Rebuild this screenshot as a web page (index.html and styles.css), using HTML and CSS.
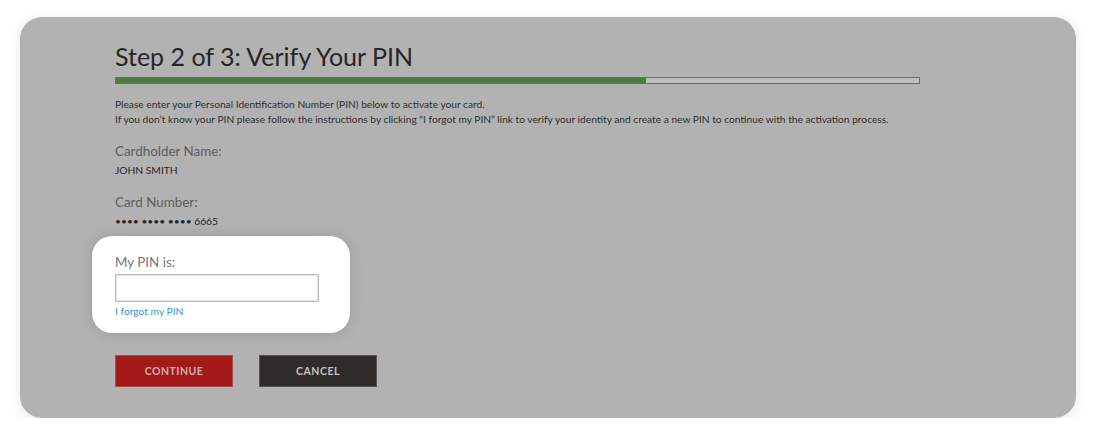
FILE: index.html
```html
<!DOCTYPE html>
<html lang="en">
<head>
<meta charset="utf-8">
<title>Step 2 of 3: Verify Your PIN</title>
<link rel="stylesheet" href="styles.css">
</head>
<body>
<main class="card">
  <h1 class="title">Step 2 of 3: Verify Your PIN</h1>
  <div class="progress"><div class="progress-fill" style="width:66%"></div></div>
  <p class="intro">Please enter your Personal Identification Number (PIN) below to activate your card.<br>If you don’t know your PIN please follow the instructions by clicking “I forgot my PIN” link to verify your identity and create a new PIN to continue with the activation process.</p>
  <div class="field first">
    <div class="label">Cardholder Name:</div>
    <div class="value">JOHN SMITH</div>
  </div>
  <div class="field">
    <div class="label">Card Number:</div>
    <div class="value">•••• •••• •••• 6665</div>
  </div>
  <section class="highlight">
    <label class="label" for="pin">My PIN is:</label>
    <input class="pin-input" id="pin" type="password">
    <a class="forgot" href="#">I forgot my PIN</a>
  </section>
  <div class="actions">
    <button class="btn btn-continue" type="button">CONTINUE</button>
    <button class="btn btn-cancel" type="button">CANCEL</button>
  </div>
</main>
</body>
</html>
```
FILE: styles.css
```css
html, body {
  margin: 0;
  padding: 0;
  background: #ffffff;
}
body {
  font-family: Lato, "Open Sans", "Liberation Sans", sans-serif;
  padding-top: 17px;
}
.card {
  box-sizing: border-box;
  margin: 0 20px;
  height: 401px;
  border-radius: 22px;
  background: #b2b2b2;
  box-shadow: 0 3px 14px rgba(0, 0, 0, 0.09);
  padding: 24px 0 0 95px;
}
.title {
  margin: 0;
  font-size: 25px;
  line-height: 30px;
  font-weight: 400;
  color: #262626;
}
.progress {
  box-sizing: border-box;
  width: 805px;
  height: 7px;
  margin-top: 6px;
  border: 1px solid #6b6b6b;
  background: #bfbfbf;
}
.progress-fill {
  height: 100%;
  background: #4e7a44;
}
.intro {
  margin: 13px 0 0;
  font-size: 10.2px;
  line-height: 15px;
  color: #2f2f2f;
}
.field {
  margin-top: 17px;
}
.field.first {
  margin-top: 16px;
}
.label {
  display: block;
  font-size: 13.4px;
  line-height: 17px;
  color: #5e5e5e;
}
.value {
  margin-top: 3px;
  font-size: 10.25px;
  line-height: 14px;
  color: #262626;
}
.highlight {
  display: flex;
  flex-direction: column;
  align-items: flex-start;
  width: 258px;
  box-sizing: border-box;
  margin: 8px 0 0 -23px;
  padding: 18px 23px 15px;
  background: #ffffff;
  border-radius: 20px;
  box-shadow: 0 0 14px rgba(0, 0, 0, 0.14);
}
.highlight .label {
  color: #777777;
}
.pin-input {
  box-sizing: border-box;
  width: 204px;
  height: 28px;
  margin: 3px 0 0;
  border: 1px solid #b9b9b9;
  box-shadow: inset 0 0 0 1px #e4e4e4;
  background: #ffffff;
  padding: 0 6px;
}
.forgot {
  margin-top: 2px;
  font-size: 10.25px;
  line-height: 14px;
  color: #3b8fd3;
  text-decoration: none;
}
.actions {
  display: flex;
  gap: 26px;
  margin-top: 22px;
}
.btn {
  width: 118px;
  height: 32px;
  border: 1px solid transparent;
  font-family: Lato, "Open Sans", "Liberation Sans", sans-serif;
  font-weight: 700;
  font-size: 10.5px;
  letter-spacing: 0.5px;
  padding: 0;
}
.btn-continue {
  background: #a31818;
  border-color: #b04848;
  color: #cfaeae;
}
.btn-cancel {
  background: #2f2b29;
  border-color: #555;
  color: #c2c2c2;
}
```
